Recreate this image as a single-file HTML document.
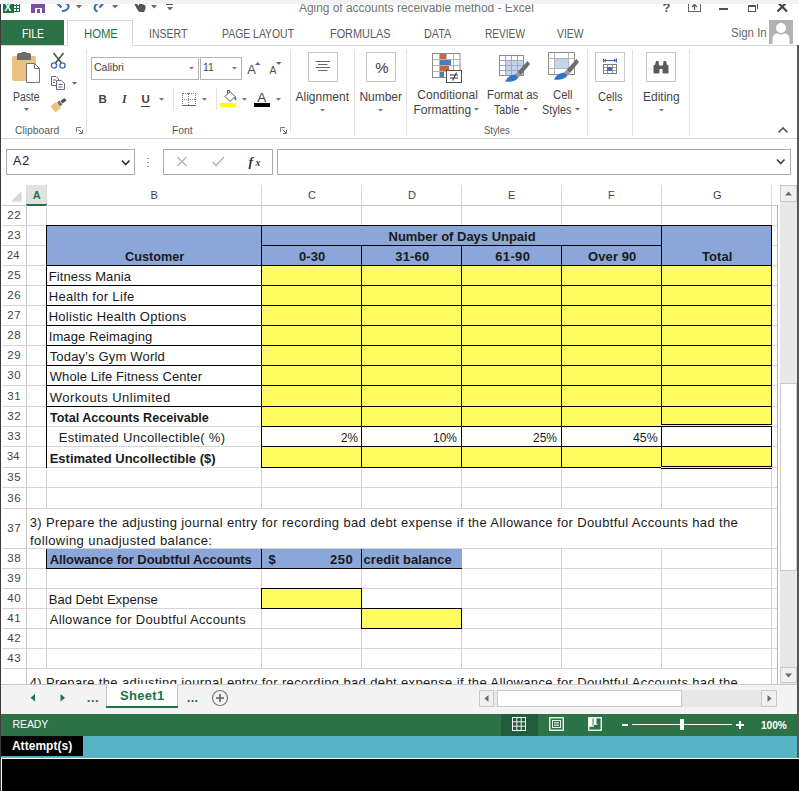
<!DOCTYPE html>
<html><head><meta charset="utf-8"><title>Aging of accounts receivable method - Excel</title>
<style>
html,body{margin:0;padding:0;}
body{width:799px;height:791px;overflow:hidden;background:#fff;position:relative;font-family:"Liberation Sans","DejaVu Sans",sans-serif;}
div{box-sizing:border-box;}
.a{position:absolute;}
svg.a{overflow:visible;}
.t{position:absolute;white-space:pre;}
</style></head><body>
<div class="t" style="left:298.50px;top:1px;font-size:12.5px;line-height:15px;color:#737373;letter-spacing:0.000px;transform:scaleX(0.9521);transform-origin:0 0;">Aging of accounts receivable method - Excel</div>
<div class="a" style="left:3px;top:0px;width:11px;height:13px;background:#1e7145;"></div>
<div class="t" style="left:4.50px;top:2px;font-size:10px;line-height:12px;color:#fff;letter-spacing:0.000px;font-weight:bold;">X</div>
<div class="a" style="left:13px;top:2px;width:7px;height:10px;border:1px solid #1e7145;background:#fff"></div>
<div class="a" style="left:14px;top:5px;width:5px;height:1px;background:#1e7145;"></div>
<div class="a" style="left:14px;top:8px;width:5px;height:1px;background:#1e7145;"></div>
<div class="a" style="left:16px;top:3px;width:1px;height:8px;background:#1e7145;"></div>
<div class="a" style="left:31px;top:0px;width:14px;height:12.5px;background:#7c4fa5;"></div>
<div class="a" style="left:34.5px;top:8px;width:7.0px;height:4.5px;background:#fff;"></div>
<div class="a" style="left:36.5px;top:9px;width:3.0px;height:3.5px;background:#7c4fa5;"></div>
<svg class="a" style="left:55px;top:0px" width="18" height="14" viewBox="0 0 18 14"><path d="M2.5 3.5 L6.5 7.5" stroke="#3e6db5" stroke-width="2.4" fill="none"/><path d="M10.5 3 C16 5.5 13.5 11 7 11" stroke="#3e6db5" stroke-width="2" fill="none"/></svg>
<svg class="a" style="left:76px;top:4.5px" width="6" height="3.5" viewBox="0 0 6 3.5"><path d="M0 0H6L3.0 3.5z" fill="#6a6a6a"/></svg>
<svg class="a" style="left:92px;top:0px" width="14" height="14" viewBox="0 0 14 14"><path d="M11 3.5 L7.5 7.5" stroke="#3e6db5" stroke-width="2.4" fill="none"/><path d="M6.5 3 C1 5.5 2 10.5 5.5 11.5" stroke="#3e6db5" stroke-width="2" fill="none"/></svg>
<svg class="a" style="left:112px;top:4.5px" width="6" height="3.5" viewBox="0 0 6 3.5"><path d="M0 0H6L3.0 3.5z" fill="#6a6a6a"/></svg>
<svg class="a" style="left:133px;top:0px" width="16" height="14" viewBox="0 0 16 14"><path d="M1.5 4.5 L3.5 3.5 L6 6 V3.5 H8 L12.5 5.5 V9 L11 12 H6 L4 9z" fill="#555"/></svg>
<svg class="a" style="left:151px;top:4.5px" width="6" height="3.5" viewBox="0 0 6 3.5"><path d="M0 0H6L3.0 3.5z" fill="#6a6a6a"/></svg>
<div class="a" style="left:166px;top:4px;width:7px;height:1px;background:#555;"></div>
<svg class="a" style="left:166.5px;top:7px" width="6" height="3.5" viewBox="0 0 6 3.5"><path d="M0 0H6L3.0 3.5z" fill="#6a6a6a"/></svg>
<div class="t" style="left:662.50px;top:0px;font-size:13px;line-height:16px;color:#555;letter-spacing:0.000px;font-weight:bold;">?</div>
<div class="a" style="left:688px;top:1px;width:13px;height:11px;border:1px solid #666"></div>
<svg class="a" style="left:690px;top:3px" width="9" height="8" viewBox="0 0 9 8"><path d="M4.5 1.5V7M2 4L4.5 1.5L7 4" stroke="#555" stroke-width="1.2" fill="none"/></svg>
<div class="a" style="left:719px;top:7.5px;width:9px;height:2.5px;background:#555;"></div>
<div class="a" style="left:748px;top:5px;width:8px;height:7px;border:1px solid #555;border-top-width:2px"></div>
<div class="a" style="left:750px;top:2px;width:8px;height:7px;border:1px solid #555;border-top-width:2px;border-left:none;border-bottom:none"></div>
<svg class="a" style="left:776px;top:1px" width="13" height="13" viewBox="0 0 13 13"><path d="M1.5 1 L11 10.5 M11 1 L1.5 10.5" stroke="#444" stroke-width="2.2" fill="none"/></svg>
<div class="a" style="left:0px;top:0px;width:799px;height:3.5px;background:#f3f3f3;"></div>
<div class="a" style="left:1px;top:20px;width:63px;height:25px;background:#2b7346;"></div>
<div class="t" style="left:21.50px;top:27px;font-size:12px;line-height:14px;color:#fff;letter-spacing:0.000px;transform:scaleX(0.8683);transform-origin:0 0;">FILE</div>
<div class="a" style="left:67px;top:20px;width:66px;height:26px;border:1px solid #d5d5d5;border-bottom:none;background:#fff"></div>
<div class="t" style="left:83.60px;top:27px;font-size:12px;line-height:14px;color:#217346;letter-spacing:0.000px;transform:scaleX(0.9390);transform-origin:0 0;">HOME</div>
<div class="t" style="left:148.62px;top:27px;font-size:12px;line-height:14px;color:#5a5a5a;letter-spacing:0.000px;transform:scaleX(0.8790);transform-origin:0 0;">INSERT</div>
<div class="t" style="left:222.20px;top:27px;font-size:12px;line-height:14px;color:#5a5a5a;letter-spacing:0.000px;transform:scaleX(0.8686);transform-origin:0 0;">PAGE LAYOUT</div>
<div class="t" style="left:329.50px;top:27px;font-size:12px;line-height:14px;color:#5a5a5a;letter-spacing:0.000px;transform:scaleX(0.9075);transform-origin:0 0;">FORMULAS</div>
<div class="t" style="left:423.70px;top:27px;font-size:12px;line-height:14px;color:#5a5a5a;letter-spacing:0.000px;transform:scaleX(0.9034);transform-origin:0 0;">DATA</div>
<div class="t" style="left:484.90px;top:27px;font-size:12px;line-height:14px;color:#5a5a5a;letter-spacing:0.000px;transform:scaleX(0.8435);transform-origin:0 0;">REVIEW</div>
<div class="t" style="left:556.50px;top:27px;font-size:12px;line-height:14px;color:#5a5a5a;letter-spacing:0.000px;transform:scaleX(0.8615);transform-origin:0 0;">VIEW</div>
<div class="t" style="left:731.00px;top:26px;font-size:12.5px;line-height:15px;color:#6a6a6a;letter-spacing:0.000px;transform:scaleX(0.9188);transform-origin:0 0;">Sign In</div>
<div class="a" style="left:769px;top:20px;width:24px;height:24px;background:#b2b2b2;"></div>
<svg class="a" style="left:769px;top:20px" width="24" height="24" viewBox="0 0 24 24"><circle cx="12" cy="8" r="5" fill="#fff"/><path d="M3.5 24 V19 Q3.5 13.5 9 13.5 Q12 15.5 15 13.5 Q20.5 13.5 20.5 19 V24z" fill="#fff"/></svg>
<div class="a" style="left:1px;top:45px;width:66px;height:1px;background:#d5d5d5;"></div>
<div class="a" style="left:133px;top:45px;width:664px;height:1px;background:#d5d5d5;"></div>
<div class="a" style="left:1px;top:138px;width:796px;height:1px;background:#d5d5d5;"></div>
<div class="a" style="left:86px;top:50px;width:1px;height:83px;background:#e2e2e2;"></div>
<div class="a" style="left:290px;top:50px;width:1px;height:83px;background:#e2e2e2;"></div>
<div class="a" style="left:354px;top:50px;width:1px;height:86px;background:#e2e2e2;"></div>
<div class="a" style="left:406px;top:50px;width:1px;height:86px;background:#e2e2e2;"></div>
<div class="a" style="left:587px;top:50px;width:1px;height:86px;background:#e2e2e2;"></div>
<div class="a" style="left:632px;top:50px;width:1px;height:86px;background:#e2e2e2;"></div>
<div class="a" style="left:689px;top:50px;width:1px;height:86px;background:#e2e2e2;"></div>
<div class="a" style="left:12px;top:56px;width:23.5px;height:24.5px;background:#eac282;border-radius:2px"></div>
<div class="a" style="left:17px;top:53px;width:14px;height:7px;background:#6d6d6d;border-radius:2px 2px 0 0"></div>
<div class="a" style="left:21px;top:51.5px;width:6px;height:3.5px;background:#6d6d6d;border-radius:2px"></div>
<svg class="a" style="left:25px;top:63px" width="16" height="20" viewBox="0 0 16 20"><path d="M1.5 0.5H9.5L14.5 5.5V19.5H1.5z" fill="#fff" stroke="#767676"/><path d="M9.5 0.5V5.5H14.5" fill="none" stroke="#767676"/></svg>
<div class="t" style="left:12.60px;top:90px;font-size:12px;line-height:14px;color:#444;letter-spacing:0.000px;transform:scaleX(0.8642);transform-origin:0 0;">Paste</div>
<svg class="a" style="left:24px;top:108.2px" width="5" height="2.8" viewBox="0 0 5 2.8"><path d="M0 0H5L2.5 2.8z" fill="#6a6a6a"/></svg>
<svg class="a" style="left:50px;top:52px" width="17" height="18" viewBox="0 0 17 18"><path d="M3.5 1 L11.5 11 M13.5 1 L5.5 11" stroke="#505050" stroke-width="1.6" fill="none"/><circle cx="4" cy="13.5" r="2.6" fill="none" stroke="#3e6db5" stroke-width="1.4"/><circle cx="12.5" cy="13.5" r="2.6" fill="none" stroke="#3e6db5" stroke-width="1.4"/></svg>
<svg class="a" style="left:50px;top:75px" width="17" height="16" viewBox="0 0 17 16"><path d="M1.5 1.5H6L8.5 4V10.5H1.5z" fill="#fff" stroke="#6a6a6a"/><path d="M6.5 5.5H11.5L14.5 8.5V14.5H6.5z" fill="#fff" stroke="#6a6a6a"/><path d="M3 5h3M3 7.5h2M8.5 9.5h4M8.5 12h4" stroke="#3e6db5"/></svg>
<svg class="a" style="left:72.2px;top:82px" width="5" height="2.8" viewBox="0 0 5 2.8"><path d="M0 0H5L2.5 2.8z" fill="#6a6a6a"/></svg>
<svg class="a" style="left:49px;top:97px" width="19" height="17" viewBox="0 0 19 17"><path d="M1.5 9 L7 5 L12 11 L6.5 15.5z" fill="#eac282"/><path d="M8 5.5 L10.5 3.5 L13.5 7.5 L11 9.5z" fill="#777"/><path d="M11.5 4 L15.5 1 L17.5 3.5 L13.5 6.5z" fill="#505050"/></svg>
<div class="t" style="left:15.00px;top:124px;font-size:11px;line-height:13px;color:#5a5a5a;letter-spacing:0.000px;transform:scaleX(0.9390);transform-origin:0 0;">Clipboard</div>
<svg class="a" style="left:76px;top:126.5px" width="7" height="7" viewBox="0 0 7 7"><path d="M0.5 5V0.5H5" stroke="#7a7a7a" fill="none"/><path d="M2.5 2.5L6 6M6.5 3V6.5H3" stroke="#7a7a7a" fill="none"/></svg>
<div class="a" style="left:91px;top:57px;width:108px;height:23px;background:#fff;border:1px solid #b4b4b4"></div>
<div class="t" style="left:94.40px;top:61px;font-size:11px;line-height:13px;color:#444;letter-spacing:0.000px;transform:scaleX(0.9567);transform-origin:0 0;">Calibri</div>
<svg class="a" style="left:189.2px;top:67.1px" width="5" height="2.6" viewBox="0 0 5 2.6"><path d="M0 0H5L2.5 2.6z" fill="#777"/></svg>
<div class="a" style="left:199.5px;top:57px;width:42.5px;height:23px;background:#fff;border:1px solid #b4b4b4"></div>
<div class="t" style="left:202.90px;top:61px;font-size:11px;line-height:13px;color:#444;letter-spacing:0.000px;transform:scaleX(0.9468);transform-origin:0 0;">11</div>
<svg class="a" style="left:232px;top:67.1px" width="5" height="2.6" viewBox="0 0 5 2.6"><path d="M0 0H5L2.5 2.6z" fill="#777"/></svg>
<div class="t" style="left:247.30px;top:62px;font-size:13px;line-height:16px;color:#505050;letter-spacing:0.000px;">A</div>
<svg class="a" style="left:254.8px;top:61.8px" width="6" height="3" viewBox="0 0 6 3"><path d="M0 3H5.5L2.75 0z" fill="#3e6db5"/></svg>
<div class="t" style="left:269.50px;top:64px;font-size:10.5px;line-height:13px;color:#505050;letter-spacing:0.000px;">A</div>
<svg class="a" style="left:275.8px;top:62.2px" width="6" height="3" viewBox="0 0 6 3"><path d="M0 0H5.5L2.75 3z" fill="#3e6db5"/></svg>
<div class="t" style="left:98.50px;top:92px;font-size:11.5px;line-height:14px;color:#444;letter-spacing:0.000px;font-weight:bold;">B</div>
<div class="t" style="left:122.00px;top:92px;font-size:12px;line-height:14px;color:#444;letter-spacing:0.000px;font-weight:bold;font-style:italic;font-family:'Liberation Serif','DejaVu Serif',serif;">I</div>
<div class="t" style="left:141.50px;top:92px;font-size:11.5px;line-height:14px;color:#444;letter-spacing:0.000px;font-weight:bold;">U</div>
<div class="a" style="left:141px;top:105.5px;width:8.5px;height:1.0px;background:#444;"></div>
<svg class="a" style="left:159.3px;top:98px" width="5" height="2.7" viewBox="0 0 5 2.7"><path d="M0 0H5L2.5 2.7z" fill="#777"/></svg>
<div class="a" style="left:173px;top:88px;width:1px;height:21.5px;background:#e2e2e2;"></div>
<div class="a" style="left:181.5px;top:92.5px;width:14px;height:13px;border:1px dotted #777;border-bottom:1px solid #666"></div>
<div class="a" style="left:188px;top:93px;width:1px;height:12px;background:transparent;border-left:1px dotted #888"></div>
<div class="a" style="left:182px;top:98.5px;width:13px;height:1.0px;background:transparent;border-top:1px dotted #888"></div>
<svg class="a" style="left:202px;top:98px" width="5" height="2.7" viewBox="0 0 5 2.7"><path d="M0 0H5L2.5 2.7z" fill="#777"/></svg>
<div class="a" style="left:216px;top:88px;width:1px;height:21.5px;background:#e2e2e2;"></div>
<svg class="a" style="left:220px;top:89px" width="18" height="14" viewBox="0 0 18 14"><path d="M5 7.5 L10 2.5 L15 7.5 L10 12.5z" fill="#fff" stroke="#555"/><path d="M7.5 5V1.5H9.5V3.5" fill="none" stroke="#555"/><path d="M15 7 q2.5 3 0.5 4.5 q-2 -1.5 -0.5 -4.5" fill="#3e6db5"/></svg>
<div class="a" style="left:220px;top:103px;width:16px;height:4px;background:#ffff00;"></div>
<svg class="a" style="left:241.9px;top:98px" width="5" height="2.7" viewBox="0 0 5 2.7"><path d="M0 0H5L2.5 2.7z" fill="#777"/></svg>
<div class="t" style="left:257.30px;top:90px;font-size:13.5px;line-height:16px;color:#444;letter-spacing:0.000px;">A</div>
<div class="a" style="left:254px;top:103px;width:16px;height:4px;background:#000;"></div>
<svg class="a" style="left:276px;top:98px" width="5" height="2.7" viewBox="0 0 5 2.7"><path d="M0 0H5L2.5 2.7z" fill="#777"/></svg>
<div class="t" style="left:171.90px;top:124px;font-size:11px;line-height:13px;color:#5a5a5a;letter-spacing:0.000px;transform:scaleX(0.9383);transform-origin:0 0;">Font</div>
<svg class="a" style="left:280px;top:126.5px" width="7" height="7" viewBox="0 0 7 7"><path d="M0.5 5V0.5H5" stroke="#7a7a7a" fill="none"/><path d="M2.5 2.5L6 6M6.5 3V6.5H3" stroke="#7a7a7a" fill="none"/></svg>
<div class="a" style="left:308px;top:52px;width:30px;height:30px;background:#fff;border:1px solid #c6c6c6"></div>
<svg class="a" style="left:315px;top:60px" width="16" height="12" viewBox="0 0 16 12"><path d="M0.5 1.5h14.5M3 4.5h9.5M0.5 7.5h14.5M3 10.5h9.5" stroke="#6a6a6a"/></svg>
<div class="t" style="left:295.40px;top:90px;font-size:12px;line-height:14px;color:#444;letter-spacing:0.047px;">Alignment</div>
<svg class="a" style="left:320.3px;top:109.2px" width="5" height="2.6" viewBox="0 0 5 2.6"><path d="M0 0H5L2.5 2.6z" fill="#777"/></svg>
<div class="a" style="left:366px;top:52px;width:30px;height:30px;background:#fff;border:1px solid #c6c6c6"></div>
<div class="t" style="left:375.30px;top:59px;font-size:15px;line-height:18px;color:#444;letter-spacing:0.000px;">%</div>
<div class="t" style="left:359.40px;top:90px;font-size:12px;line-height:14px;color:#444;letter-spacing:-0.017px;">Number</div>
<svg class="a" style="left:378px;top:109.2px" width="5" height="2.6" viewBox="0 0 5 2.6"><path d="M0 0H5L2.5 2.6z" fill="#777"/></svg>
<svg class="a" style="left:431px;top:52px" width="32" height="32" viewBox="0 0 32 32"><rect x="1.5" y="1.5" width="27.5" height="24" fill="#fff" stroke="#8a8a8a"/><path d="M1.5 7.5h27.5M1.5 13.5h27.5M1.5 19.5h27.5M8.5 1.5v24M15.5 1.5v24M22.5 1.5v24" stroke="#b5b5b5"/><rect x="9" y="2" width="6" height="5" fill="#d0613a"/><rect x="9" y="8" width="11" height="5" fill="#4a7ebb"/><rect x="9" y="14" width="9" height="5" fill="#d0613a"/><rect x="9" y="20" width="4" height="5" fill="#4a7ebb"/><rect x="15.5" y="18.5" width="15" height="12" fill="#fff" stroke="#505050"/><path d="M19 23h8M19 26h8M25.5 20.5l-4 8" stroke="#333" stroke-width="1.1"/></svg>
<div class="t" style="left:417.30px;top:88px;font-size:12px;line-height:14px;color:#444;letter-spacing:0.062px;">Conditional</div>
<div class="t" style="left:413.50px;top:103px;font-size:12px;line-height:14px;color:#444;letter-spacing:0.025px;">Formatting</div>
<svg class="a" style="left:474px;top:108.4px" width="5" height="2.6" viewBox="0 0 5 2.6"><path d="M0 0H5L2.5 2.6z" fill="#6a6a6a"/></svg>
<svg class="a" style="left:497px;top:52px" width="36" height="32" viewBox="0 0 36 32"><rect x="2.5" y="3.5" width="24" height="20" fill="#fff" stroke="#8a8a8a"/><rect x="9" y="9" width="17" height="14" fill="#c3d5ec"/><path d="M2.5 8.5h24M2.5 13.5h24M2.5 18.5h24M8.5 3.5v20M14.5 3.5v20M20.5 3.5v20" stroke="#9aa9bd"/><g transform="translate(0,3)"><path d="M30.5 6 L33 9 L24 20 L20.5 17z" fill="#6d6d6d"/><path d="M20.5 17 L24 20 L21.5 22.5 L18 19.5z" fill="#9a9a9a"/><path d="M18 19.5 q-7 0.5 -10 7 q9 1.5 13.5 -4z" fill="#2e75c9"/></g></svg>
<div class="t" style="left:486.70px;top:88px;font-size:12px;line-height:14px;color:#444;letter-spacing:0.000px;transform:scaleX(0.9479);transform-origin:0 0;">Format as</div>
<div class="t" style="left:493.80px;top:103px;font-size:12px;line-height:14px;color:#444;letter-spacing:0.000px;transform:scaleX(0.8858);transform-origin:0 0;">Table</div>
<svg class="a" style="left:522.9px;top:108.4px" width="5" height="2.6" viewBox="0 0 5 2.6"><path d="M0 0H5L2.5 2.6z" fill="#6a6a6a"/></svg>
<svg class="a" style="left:546px;top:50px" width="36" height="32" viewBox="0 0 36 32"><rect x="2.5" y="2.5" width="26" height="22" fill="#fff" stroke="#8a8a8a"/><path d="M2.5 8.5h26M2.5 18.5h26M8.5 2.5v22M22.5 2.5v22" stroke="#b5b5b5"/><rect x="9" y="9" width="13" height="9" fill="#c3d5ec"/><g transform="translate(0,3)"><path d="M30.5 6 L33 9 L24 20 L20.5 17z" fill="#6d6d6d"/><path d="M20.5 17 L24 20 L21.5 22.5 L18 19.5z" fill="#9a9a9a"/><path d="M18 19.5 q-7 0.5 -10 7 q9 1.5 13.5 -4z" fill="#2e75c9"/></g></svg>
<div class="t" style="left:552.50px;top:88px;font-size:12px;line-height:14px;color:#444;letter-spacing:0.000px;transform:scaleX(0.9397);transform-origin:0 0;">Cell</div>
<div class="t" style="left:541.60px;top:103px;font-size:12px;line-height:14px;color:#444;letter-spacing:0.000px;transform:scaleX(0.8966);transform-origin:0 0;">Styles</div>
<svg class="a" style="left:575px;top:108.4px" width="5" height="2.6" viewBox="0 0 5 2.6"><path d="M0 0H5L2.5 2.6z" fill="#6a6a6a"/></svg>
<div class="t" style="left:483.90px;top:124px;font-size:11px;line-height:13px;color:#5a5a5a;letter-spacing:0.000px;transform:scaleX(0.8570);transform-origin:0 0;">Styles</div>
<div class="a" style="left:595px;top:52px;width:30px;height:30px;background:#fff;border:1px solid #c6c6c6"></div>
<svg class="a" style="left:602px;top:58px" width="17" height="17" viewBox="0 0 17 17"><path d="M1.5 2.5h13M1.5 0.5v4M14.5 0.5v4" stroke="#3e6db5"/><path d="M4 1l-2 1.5l2 1.5M12 1l2 1.5l-2 1.5" stroke="#3e6db5" fill="none"/><rect x="1.5" y="6.5" width="13" height="9" fill="#fff" stroke="#7a7a7a"/><path d="M1.5 9.5h13M1.5 12.5h13M5.5 6.5v9M10.5 6.5v9" stroke="#9a9a9a"/><rect x="5" y="9" width="5" height="4" fill="#3e6db5"/></svg>
<div class="t" style="left:597.90px;top:90px;font-size:12px;line-height:14px;color:#444;letter-spacing:0.000px;transform:scaleX(0.9148);transform-origin:0 0;">Cells</div>
<svg class="a" style="left:607.9px;top:109.2px" width="5" height="2.6" viewBox="0 0 5 2.6"><path d="M0 0H5L2.5 2.6z" fill="#777"/></svg>
<div class="a" style="left:646px;top:52px;width:30px;height:30px;background:#fff;border:1px solid #c6c6c6"></div>
<svg class="a" style="left:653px;top:60px" width="16" height="14" viewBox="0 0 16 14"><rect x="0.5" y="5" width="6" height="8.5" rx="1" fill="#5a5a5a"/><rect x="9.5" y="5" width="6" height="8.5" rx="1" fill="#5a5a5a"/><path d="M2 5L3 1H5.5L6 5zM10 5L10.5 1H13L14 5z" fill="#5a5a5a"/><rect x="6" y="5.5" width="4" height="3.5" fill="#5a5a5a"/></svg>
<div class="t" style="left:643.00px;top:90px;font-size:12px;line-height:14px;color:#444;letter-spacing:-0.003px;">Editing</div>
<svg class="a" style="left:658.9px;top:109.2px" width="5" height="2.6" viewBox="0 0 5 2.6"><path d="M0 0H5L2.5 2.6z" fill="#777"/></svg>
<svg class="a" style="left:777px;top:126px" width="12" height="8" viewBox="0 0 12 8"><path d="M1.5 6.5 L6 2 L10.5 6.5" stroke="#555" stroke-width="1.7" fill="none"/></svg>
<div class="a" style="left:6px;top:149px;width:129px;height:26px;background:#fff;border:1px solid #ababab"></div>
<div class="t" style="left:13.10px;top:154px;font-size:12.5px;line-height:15px;color:#222;letter-spacing:0.863px;">A2</div>
<svg class="a" style="left:121px;top:159px" width="10" height="8" viewBox="0 0 10 8"><path d="M1 1.5 L4.75 5.5 L8.5 1.5" stroke="#333" stroke-width="1.7" fill="none"/></svg>
<div class="a" style="left:147px;top:157.5px;width:1.5px;height:1.5px;background:#a0a0a0;"></div>
<div class="a" style="left:147px;top:161.5px;width:1.5px;height:1.5px;background:#a0a0a0;"></div>
<div class="a" style="left:147px;top:165.5px;width:1.5px;height:1.5px;background:#a0a0a0;"></div>
<div class="a" style="left:163px;top:149px;width:109.5px;height:26px;background:#fff;border:1px solid #ababab"></div>
<svg class="a" style="left:176px;top:156px" width="12" height="11" viewBox="0 0 12 11"><path d="M1.5 1 L10.5 10 M10.5 1 L1.5 10" stroke="#b4b4b4" stroke-width="1.3" fill="none"/></svg>
<svg class="a" style="left:211px;top:156px" width="15" height="11" viewBox="0 0 15 11"><path d="M1.5 6 L5 9.5 L13 1" stroke="#b4b4b4" stroke-width="1.4" fill="none"/></svg>
<div class="t" style="left:248.60px;top:154px;font-size:13.5px;line-height:16px;color:#333;letter-spacing:0.000px;font-weight:bold;font-style:italic;font-family:'Liberation Serif','DejaVu Serif',serif;">f</div>
<div class="t" style="left:255.50px;top:158px;font-size:9.5px;line-height:11px;color:#333;letter-spacing:0.000px;font-weight:bold;font-style:italic;font-family:'Liberation Serif','DejaVu Serif',serif;">x</div>
<div class="a" style="left:276.5px;top:149px;width:514.5px;height:26px;background:#fff;border:1px solid #ababab"></div>
<svg class="a" style="left:776px;top:158px" width="10" height="8" viewBox="0 0 10 8"><path d="M1 1.5 L4.75 5.5 L8.5 1.5" stroke="#444" stroke-width="1.7" fill="none"/></svg>
<svg class="a" style="left:11px;top:191px" width="11" height="11" viewBox="0 0 11 11"><path d="M10.5 0 V10.5 H0z" fill="#d8d8d8"/></svg>
<div class="a" style="left:27px;top:185px;width:19px;height:20px;background:#e1e1e1;"></div>
<div class="t" style="left:32.80px;top:189px;font-size:11px;line-height:13px;color:#217346;letter-spacing:0.000px;font-weight:bold;">A</div>
<div class="t" style="left:150.40px;top:189px;font-size:11px;line-height:13px;color:#444;letter-spacing:0.000px;">B</div>
<div class="t" style="left:307.90px;top:189px;font-size:11px;line-height:13px;color:#444;letter-spacing:0.000px;">C</div>
<div class="t" style="left:407.90px;top:189px;font-size:11px;line-height:13px;color:#444;letter-spacing:0.000px;">D</div>
<div class="t" style="left:507.90px;top:189px;font-size:11px;line-height:13px;color:#444;letter-spacing:0.000px;">E</div>
<div class="t" style="left:607.90px;top:189px;font-size:11px;line-height:13px;color:#444;letter-spacing:0.000px;">F</div>
<div class="t" style="left:712.90px;top:189px;font-size:11px;line-height:13px;color:#444;letter-spacing:0.000px;">G</div>
<div class="a" style="left:26px;top:185px;width:1px;height:20px;background:#dadada;"></div>
<div class="a" style="left:46px;top:185px;width:1px;height:20px;background:#dadada;"></div>
<div class="a" style="left:261px;top:185px;width:1px;height:20px;background:#dadada;"></div>
<div class="a" style="left:361px;top:185px;width:1px;height:20px;background:#dadada;"></div>
<div class="a" style="left:461px;top:185px;width:1px;height:20px;background:#dadada;"></div>
<div class="a" style="left:561px;top:185px;width:1px;height:20px;background:#dadada;"></div>
<div class="a" style="left:661px;top:185px;width:1px;height:20px;background:#dadada;"></div>
<div class="a" style="left:771px;top:185px;width:1px;height:20px;background:#dadada;"></div>
<div class="a" style="left:2px;top:205px;width:775px;height:1px;background:#c8c8c8;"></div>
<div class="a" style="left:26px;top:204px;width:21px;height:2px;background:#217346;"></div>
<div class="a" style="left:2px;top:225px;width:775px;height:1px;background:#d4d4d4;"></div>
<div class="a" style="left:2px;top:245px;width:775px;height:1px;background:#d4d4d4;"></div>
<div class="a" style="left:2px;top:265px;width:775px;height:1px;background:#d4d4d4;"></div>
<div class="a" style="left:2px;top:285px;width:775px;height:1px;background:#d4d4d4;"></div>
<div class="a" style="left:2px;top:305px;width:775px;height:1px;background:#d4d4d4;"></div>
<div class="a" style="left:2px;top:325px;width:775px;height:1px;background:#d4d4d4;"></div>
<div class="a" style="left:2px;top:345px;width:775px;height:1px;background:#d4d4d4;"></div>
<div class="a" style="left:2px;top:365px;width:775px;height:1px;background:#d4d4d4;"></div>
<div class="a" style="left:2px;top:385px;width:775px;height:1px;background:#d4d4d4;"></div>
<div class="a" style="left:2px;top:406px;width:775px;height:1px;background:#d4d4d4;"></div>
<div class="a" style="left:2px;top:426px;width:775px;height:1px;background:#d4d4d4;"></div>
<div class="a" style="left:2px;top:446px;width:775px;height:1px;background:#d4d4d4;"></div>
<div class="a" style="left:2px;top:467px;width:775px;height:1px;background:#d4d4d4;"></div>
<div class="a" style="left:2px;top:487px;width:775px;height:1px;background:#d4d4d4;"></div>
<div class="a" style="left:2px;top:508px;width:775px;height:1px;background:#d4d4d4;"></div>
<div class="a" style="left:2px;top:548px;width:775px;height:1px;background:#d4d4d4;"></div>
<div class="a" style="left:2px;top:568px;width:775px;height:1px;background:#d4d4d4;"></div>
<div class="a" style="left:2px;top:588px;width:775px;height:1px;background:#d4d4d4;"></div>
<div class="a" style="left:2px;top:608px;width:775px;height:1px;background:#d4d4d4;"></div>
<div class="a" style="left:2px;top:628px;width:775px;height:1px;background:#d4d4d4;"></div>
<div class="a" style="left:2px;top:648px;width:775px;height:1px;background:#d4d4d4;"></div>
<div class="a" style="left:2px;top:668px;width:775px;height:1px;background:#d4d4d4;"></div>
<div class="a" style="left:26px;top:205px;width:1px;height:479px;background:#c8c8c8;"></div>
<div class="a" style="left:46px;top:205px;width:1px;height:479px;background:#d4d4d4;"></div>
<div class="a" style="left:261px;top:205px;width:1px;height:479px;background:#d4d4d4;"></div>
<div class="a" style="left:361px;top:205px;width:1px;height:479px;background:#d4d4d4;"></div>
<div class="a" style="left:461px;top:205px;width:1px;height:479px;background:#d4d4d4;"></div>
<div class="a" style="left:561px;top:205px;width:1px;height:479px;background:#d4d4d4;"></div>
<div class="a" style="left:661px;top:205px;width:1px;height:479px;background:#d4d4d4;"></div>
<div class="a" style="left:771px;top:205px;width:1px;height:479px;background:#d4d4d4;"></div>
<div class="a" style="left:777px;top:205px;width:1px;height:479px;background:#b4b4b4;"></div>
<div class="t" style="left:7.30px;top:208px;font-size:11.5px;line-height:14px;color:#444;letter-spacing:0.504px;">22</div>
<div class="t" style="left:7.30px;top:228px;font-size:11.5px;line-height:14px;color:#444;letter-spacing:0.504px;">23</div>
<div class="t" style="left:7.30px;top:248px;font-size:11.5px;line-height:14px;color:#444;letter-spacing:0.000px;transform:scaleX(0.9630);transform-origin:0 0;">24</div>
<div class="t" style="left:7.30px;top:268px;font-size:11.5px;line-height:14px;color:#444;letter-spacing:0.504px;">25</div>
<div class="t" style="left:7.30px;top:288px;font-size:11.5px;line-height:14px;color:#444;letter-spacing:0.504px;">26</div>
<div class="t" style="left:7.30px;top:308px;font-size:11.5px;line-height:14px;color:#444;letter-spacing:0.504px;">27</div>
<div class="t" style="left:7.30px;top:328px;font-size:11.5px;line-height:14px;color:#444;letter-spacing:0.504px;">28</div>
<div class="t" style="left:7.30px;top:348px;font-size:11.5px;line-height:14px;color:#444;letter-spacing:0.504px;">29</div>
<div class="t" style="left:7.30px;top:368px;font-size:11.5px;line-height:14px;color:#444;letter-spacing:0.504px;">30</div>
<div class="t" style="left:7.30px;top:389px;font-size:11.5px;line-height:14px;color:#444;letter-spacing:0.504px;">31</div>
<div class="t" style="left:7.30px;top:409px;font-size:11.5px;line-height:14px;color:#444;letter-spacing:0.504px;">32</div>
<div class="t" style="left:7.30px;top:429px;font-size:11.5px;line-height:14px;color:#444;letter-spacing:0.504px;">33</div>
<div class="t" style="left:7.30px;top:449px;font-size:11.5px;line-height:14px;color:#444;letter-spacing:0.000px;transform:scaleX(0.9630);transform-origin:0 0;">34</div>
<div class="t" style="left:7.30px;top:470px;font-size:11.5px;line-height:14px;color:#444;letter-spacing:0.504px;">35</div>
<div class="t" style="left:7.30px;top:491px;font-size:11.5px;line-height:14px;color:#444;letter-spacing:0.504px;">36</div>
<div class="t" style="left:7.30px;top:521px;font-size:11.5px;line-height:14px;color:#444;letter-spacing:0.504px;">37</div>
<div class="t" style="left:7.30px;top:551px;font-size:11.5px;line-height:14px;color:#444;letter-spacing:0.504px;">38</div>
<div class="t" style="left:7.30px;top:571px;font-size:11.5px;line-height:14px;color:#444;letter-spacing:0.504px;">39</div>
<div class="t" style="left:7.30px;top:591px;font-size:11.5px;line-height:14px;color:#444;letter-spacing:0.504px;">40</div>
<div class="t" style="left:7.30px;top:611px;font-size:11.5px;line-height:14px;color:#444;letter-spacing:0.504px;">41</div>
<div class="t" style="left:7.30px;top:631px;font-size:11.5px;line-height:14px;color:#444;letter-spacing:0.504px;">42</div>
<div class="t" style="left:7.30px;top:651px;font-size:11.5px;line-height:14px;color:#444;letter-spacing:0.504px;">43</div>
<div class="a" style="left:27px;top:509px;width:744px;height:39px;background:#fff;"></div>
<div class="a" style="left:27px;top:669px;width:744px;height:15px;background:#fff;"></div>
<div class="a" style="left:46px;top:225px;width:726px;height:40px;background:#8ba6d8;"></div>
<div class="a" style="left:261px;top:265px;width:511px;height:161px;background:#fffc62;"></div>
<div class="a" style="left:261px;top:426px;width:511px;height:20px;background:#fff;"></div>
<div class="a" style="left:261px;top:446px;width:511px;height:21px;background:#fffc62;"></div>
<div class="a" style="left:46px;top:225px;width:726px;height:1px;background:#000;"></div>
<div class="a" style="left:261px;top:245px;width:401px;height:1px;background:#000;"></div>
<div class="a" style="left:46px;top:265px;width:726px;height:1px;background:#000;"></div>
<div class="a" style="left:46px;top:285px;width:726px;height:1px;background:#000;"></div>
<div class="a" style="left:46px;top:305px;width:726px;height:1px;background:#000;"></div>
<div class="a" style="left:46px;top:325px;width:726px;height:1px;background:#000;"></div>
<div class="a" style="left:46px;top:345px;width:726px;height:1px;background:#000;"></div>
<div class="a" style="left:46px;top:365px;width:726px;height:1px;background:#000;"></div>
<div class="a" style="left:46px;top:385px;width:726px;height:1px;background:#000;"></div>
<div class="a" style="left:46px;top:406px;width:726px;height:1px;background:#000;"></div>
<div class="a" style="left:46px;top:405.5px;width:726px;height:0.5px;background:rgba(0,0,0,.45);"></div>
<div class="a" style="left:261px;top:426px;width:511px;height:1px;background:#000;"></div>
<div class="a" style="left:261px;top:446px;width:511px;height:1px;background:#000;"></div>
<div class="a" style="left:261px;top:467px;width:511px;height:1px;background:#000;"></div>
<div class="a" style="left:46px;top:225px;width:1px;height:243px;background:#000;"></div>
<div class="a" style="left:261px;top:225px;width:1px;height:243px;background:#000;"></div>
<div class="a" style="left:661px;top:225px;width:1px;height:243px;background:#000;"></div>
<div class="a" style="left:771px;top:225px;width:1px;height:244px;background:#000;"></div>
<div class="a" style="left:361px;top:245px;width:1px;height:223px;background:#000;"></div>
<div class="a" style="left:461px;top:245px;width:1px;height:223px;background:#000;"></div>
<div class="a" style="left:561px;top:245px;width:1px;height:223px;background:#000;"></div>
<div class="a" style="left:661px;top:424px;width:111px;height:1px;background:#000;"></div>
<div class="a" style="left:661px;top:425px;width:111px;height:1px;background:#fffc62;"></div>
<div class="a" style="left:661px;top:426px;width:111px;height:1px;background:#000;"></div>
<div class="a" style="left:661px;top:465.5px;width:111px;height:1.0px;background:#000;"></div>
<div class="a" style="left:661px;top:466.5px;width:111px;height:1.0px;background:#fffc62;"></div>
<div class="a" style="left:661px;top:467.5px;width:111px;height:1.0px;background:#000;"></div>
<div class="a" style="left:46px;top:549px;width:416px;height:19px;background:#8ba6d8;"></div>
<div class="a" style="left:46px;top:568px;width:416px;height:1px;background:#000;"></div>
<div class="a" style="left:46px;top:549px;width:1px;height:20px;background:#000;"></div>
<div class="a" style="left:261px;top:549px;width:1px;height:20px;background:#000;"></div>
<div class="a" style="left:361px;top:549px;width:1px;height:20px;background:#000;"></div>
<div class="a" style="left:261px;top:588px;width:101px;height:20px;background:#fffc62;"></div>
<div class="a" style="left:261px;top:588px;width:101px;height:1px;background:#000;"></div>
<div class="a" style="left:261px;top:608px;width:101px;height:1px;background:#000;"></div>
<div class="a" style="left:261px;top:588px;width:1px;height:21px;background:#000;"></div>
<div class="a" style="left:361px;top:588px;width:1px;height:21px;background:#000;"></div>
<div class="a" style="left:361px;top:608px;width:101px;height:20px;background:#fffc62;"></div>
<div class="a" style="left:361px;top:608px;width:101px;height:1px;background:#000;"></div>
<div class="a" style="left:361px;top:628px;width:101px;height:1px;background:#000;"></div>
<div class="a" style="left:361px;top:608px;width:1px;height:21px;background:#000;"></div>
<div class="a" style="left:461px;top:608px;width:1px;height:21px;background:#000;"></div>
<div class="t" style="left:388.50px;top:229px;font-size:13px;line-height:16px;color:#1a1a1a;letter-spacing:-0.011px;font-weight:bold;">Number of Days Unpaid</div>
<div class="t" style="left:125.00px;top:249px;font-size:13px;line-height:16px;color:#1a1a1a;letter-spacing:0.000px;font-weight:bold;transform:scaleX(0.9750);transform-origin:0 0;">Customer</div>
<div class="t" style="left:299.00px;top:249px;font-size:13px;line-height:16px;color:#1a1a1a;letter-spacing:0.070px;font-weight:bold;">0-30</div>
<div class="t" style="left:395.30px;top:249px;font-size:13px;line-height:16px;color:#1a1a1a;letter-spacing:0.170px;font-weight:bold;">31-60</div>
<div class="t" style="left:495.20px;top:249px;font-size:13px;line-height:16px;color:#1a1a1a;letter-spacing:0.370px;font-weight:bold;">61-90</div>
<div class="t" style="left:588.10px;top:249px;font-size:13px;line-height:16px;color:#1a1a1a;letter-spacing:0.088px;font-weight:bold;">Over 90</div>
<div class="t" style="left:702.00px;top:249px;font-size:13px;line-height:16px;color:#1a1a1a;letter-spacing:0.056px;font-weight:bold;">Total</div>
<div class="t" style="left:48.70px;top:269px;font-size:13px;line-height:16px;color:#1a1a1a;letter-spacing:0.118px;">Fitness Mania</div>
<div class="t" style="left:48.70px;top:289px;font-size:13px;line-height:16px;color:#1a1a1a;letter-spacing:0.336px;">Health for Life</div>
<div class="t" style="left:48.70px;top:309px;font-size:13px;line-height:16px;color:#1a1a1a;letter-spacing:0.277px;">Holistic Health Options</div>
<div class="t" style="left:48.70px;top:329px;font-size:13px;line-height:16px;color:#1a1a1a;letter-spacing:0.117px;">Image Reimaging</div>
<div class="t" style="left:49.70px;top:349px;font-size:13px;line-height:16px;color:#1a1a1a;letter-spacing:0.186px;">Today's Gym World</div>
<div class="t" style="left:49.70px;top:369px;font-size:13px;line-height:16px;color:#1a1a1a;letter-spacing:0.115px;">Whole Life Fitness Center</div>
<div class="t" style="left:49.70px;top:390px;font-size:13px;line-height:16px;color:#1a1a1a;letter-spacing:0.475px;">Workouts Unlimited</div>
<div class="t" style="left:49.70px;top:410px;font-size:13px;line-height:16px;color:#1a1a1a;letter-spacing:0.000px;font-weight:bold;transform:scaleX(0.9687);transform-origin:0 0;">Total Accounts Receivable</div>
<div class="t" style="left:58.80px;top:430px;font-size:13px;line-height:16px;color:#1a1a1a;letter-spacing:0.280px;">Estimated Uncollectible( %)</div>
<div class="t" style="left:49.70px;top:451px;font-size:13px;line-height:16px;color:#1a1a1a;letter-spacing:-0.012px;font-weight:bold;">Estimated Uncollectible ($)</div>
<div class="t" style="left:340.80px;top:430px;font-size:13px;line-height:16px;color:#1a1a1a;letter-spacing:0.000px;transform:scaleX(0.9048);transform-origin:0 0;">2%</div>
<div class="t" style="left:433.40px;top:430px;font-size:13px;line-height:16px;color:#1a1a1a;letter-spacing:0.000px;transform:scaleX(0.9221);transform-origin:0 0;">10%</div>
<div class="t" style="left:533.40px;top:430px;font-size:13px;line-height:16px;color:#1a1a1a;letter-spacing:0.000px;transform:scaleX(0.9221);transform-origin:0 0;">25%</div>
<div class="t" style="left:632.90px;top:430px;font-size:13px;line-height:16px;color:#1a1a1a;letter-spacing:0.000px;transform:scaleX(0.9486);transform-origin:0 0;">45%</div>
<div class="t" style="left:29.70px;top:515px;font-size:13px;line-height:16px;color:#1a1a1a;letter-spacing:0.370px;">3) Prepare the adjusting journal entry for recording bad debt expense if the Allowance for Doubtful Accounts had the</div>
<div class="t" style="left:30.00px;top:533px;font-size:13px;line-height:16px;color:#1a1a1a;letter-spacing:0.405px;">following unadjusted balance:</div>
<div class="t" style="left:49.70px;top:552px;font-size:13px;line-height:16px;color:#1a1a1a;letter-spacing:-0.086px;font-weight:bold;">Allowance for Doubtful Accounts</div>
<div class="t" style="left:268.50px;top:552px;font-size:13px;line-height:16px;color:#1a1a1a;letter-spacing:0.000px;font-weight:bold;">$</div>
<div class="t" style="left:330.00px;top:552px;font-size:13px;line-height:16px;color:#1a1a1a;letter-spacing:0.520px;font-weight:bold;">250</div>
<div class="t" style="left:363.50px;top:552px;font-size:13px;line-height:16px;color:#1a1a1a;letter-spacing:0.062px;font-weight:bold;">credit balance</div>
<div class="t" style="left:48.70px;top:592px;font-size:13px;line-height:16px;color:#1a1a1a;letter-spacing:0.042px;">Bad Debt Expense</div>
<div class="t" style="left:49.70px;top:612px;font-size:13px;line-height:16px;color:#1a1a1a;letter-spacing:0.322px;">Allowance for Doubtful Accounts</div>
<div class="t" style="left:29.70px;top:675px;font-size:13px;line-height:16px;color:#1a1a1a;letter-spacing:0.370px;">4) Prepare the adjusting journal entry for recording bad debt expense if the Allowance for Doubtful Accounts had the</div>
<div class="a" style="left:780px;top:185px;width:17px;height:499px;background:#e8e8e8;"></div>
<div class="a" style="left:780px;top:185px;width:17px;height:17px;background:#f0f0f0;border:1px solid #c9c9c9"></div>
<svg class="a" style="left:785px;top:191px" width="8" height="5" viewBox="0 0 8 5"><path d="M0 4.5H7L3.5 0.5z" fill="#6a6a6a"/></svg>
<div class="a" style="left:780px;top:383px;width:17px;height:188px;background:#fff;border:1px solid #c9c9c9"></div>
<div class="a" style="left:780px;top:667px;width:17px;height:16px;background:#f0f0f0;border:1px solid #c9c9c9"></div>
<svg class="a" style="left:785px;top:673px" width="8" height="5" viewBox="0 0 8 5"><path d="M0 0.5H7L3.5 4.5z" fill="#6a6a6a"/></svg>
<div class="a" style="left:1px;top:684px;width:796px;height:30px;background:#f3f3f3;"></div>
<div class="a" style="left:1px;top:684px;width:796px;height:1px;background:#c8c8c8;"></div>
<svg class="a" style="left:30px;top:694px" width="6" height="8" viewBox="0 0 6 8"><path d="M5 0V7.5L0.5 3.75z" fill="#217346"/></svg>
<svg class="a" style="left:60px;top:694px" width="6" height="8" viewBox="0 0 6 8"><path d="M0.5 0V7.5L5 3.75z" fill="#217346"/></svg>
<div class="t" style="left:86.80px;top:690px;font-size:13px;line-height:16px;color:#217346;letter-spacing:0.488px;font-weight:bold;">...</div>
<div class="a" style="left:106px;top:685px;width:72px;height:21px;background:#fff;"></div>
<div class="a" style="left:106px;top:706px;width:72px;height:2px;background:#217346;"></div>
<div class="a" style="left:106px;top:685px;width:1px;height:21px;background:#c8c8c8;"></div>
<div class="a" style="left:177px;top:685px;width:1px;height:21px;background:#c8c8c8;"></div>
<div class="a" style="left:107px;top:684px;width:70px;height:1px;background:#fff;"></div>
<div class="t" style="left:120.00px;top:688px;font-size:13px;line-height:16px;color:#217346;letter-spacing:0.300px;font-weight:bold;">Sheet1</div>
<div class="t" style="left:186.80px;top:690px;font-size:13px;line-height:16px;color:#217346;letter-spacing:0.288px;font-weight:bold;">...</div>
<svg class="a" style="left:211px;top:689px" width="18" height="18" viewBox="0 0 18 18"><circle cx="9" cy="9" r="7.5" fill="none" stroke="#7a7a7a" stroke-width="1.2"/><path d="M9 5v8M5 9h8" stroke="#5a5a5a" stroke-width="1.5"/></svg>
<div class="a" style="left:479px;top:690px;width:298px;height:17px;background:#e8e8e8;"></div>
<div class="a" style="left:479px;top:690px;width:15px;height:17px;background:#f0f0f0;border:1px solid #c9c9c9"></div>
<svg class="a" style="left:484px;top:695px" width="5" height="8" viewBox="0 0 5 8"><path d="M4.5 0V7L0.5 3.5z" fill="#6a6a6a"/></svg>
<div class="a" style="left:496.5px;top:690px;width:185.5px;height:17px;background:#fff;border:1px solid #c9c9c9"></div>
<div class="a" style="left:761px;top:690px;width:16px;height:17px;background:#f0f0f0;border:1px solid #c9c9c9"></div>
<svg class="a" style="left:767px;top:695px" width="5" height="8" viewBox="0 0 5 8"><path d="M0.5 0V7L4.5 3.5z" fill="#6a6a6a"/></svg>
<div class="a" style="left:1px;top:714px;width:796px;height:22px;background:#2b7346;"></div>
<div class="t" style="left:12.50px;top:718px;font-size:10.5px;line-height:13px;color:#fff;letter-spacing:-0.093px;">READY</div>
<div class="a" style="left:501px;top:714px;width:37px;height:22px;background:#235c3a;"></div>
<svg class="a" style="left:512px;top:717px" width="15" height="15" viewBox="0 0 15 15"><rect x="0.5" y="0.5" width="13" height="13" fill="none" stroke="#fff" stroke-width="1"/><path d="M0.5 4.8h13M0.5 9.2h13M4.8 0.5v13M9.2 0.5v13" stroke="#fff" stroke-width="0.9"/></svg>
<svg class="a" style="left:549px;top:717px" width="16" height="15" viewBox="0 0 16 15"><rect x="0.75" y="0.75" width="13.5" height="12.5" fill="none" stroke="#fff" stroke-width="1.3"/><rect x="3.5" y="3.5" width="8" height="7" fill="none" stroke="#fff" stroke-width="0.9"/><path d="M5 5.5h5M5 7h5M5 8.5h5" stroke="#fff" stroke-width="0.7"/></svg>
<svg class="a" style="left:588px;top:717px" width="15" height="15" viewBox="0 0 15 15"><rect x="0.75" y="0.75" width="12.5" height="12.5" fill="none" stroke="#fff" stroke-width="1.3"/><rect x="1" y="1" width="3.5" height="8" fill="#fff"/><rect x="5.5" y="1" width="3" height="6" fill="#fff"/><path d="M1 9.5h4.5V7.5h4" stroke="#fff" stroke-width="0.8" fill="none"/></svg>
<div class="a" style="left:622px;top:723.5px;width:6px;height:2.0px;background:#fff;"></div>
<div class="a" style="left:632px;top:724px;width:100px;height:1px;background:#fff;"></div>
<div class="a" style="left:680px;top:718.5px;width:4px;height:11.5px;background:#fff;"></div>
<div class="a" style="left:736px;top:723.5px;width:8px;height:2.0px;background:#fff;"></div>
<div class="a" style="left:739px;top:720.5px;width:2px;height:8.0px;background:#fff;"></div>
<div class="t" style="left:760.50px;top:719px;font-size:10.5px;line-height:13px;color:#fff;letter-spacing:0.000px;font-weight:bold;transform:scaleX(0.9630);transform-origin:0 0;">100%</div>
<div class="a" style="left:1px;top:736px;width:796px;height:22px;background:#56b4c5;"></div>
<div class="a" style="left:1px;top:736px;width:82px;height:20px;background:#000;"></div>
<div class="t" style="left:11.90px;top:739px;font-size:12px;line-height:14px;color:#fff;letter-spacing:0.045px;font-weight:bold;">Attempt(s)</div>
<div class="a" style="left:1px;top:758px;width:798px;height:1px;background:#fff;"></div>
<div class="a" style="left:1px;top:759px;width:798px;height:32px;background:#000;"></div>
<div class="a" style="left:1px;top:758px;width:1px;height:33px;background:#fff;"></div>
<div class="a" style="left:0px;top:3.5px;width:1.2px;height:787.5px;background:#3c3c3c;"></div>
<div class="a" style="left:797px;top:45px;width:2px;height:713px;background:#575757;"></div>
</body></html>
